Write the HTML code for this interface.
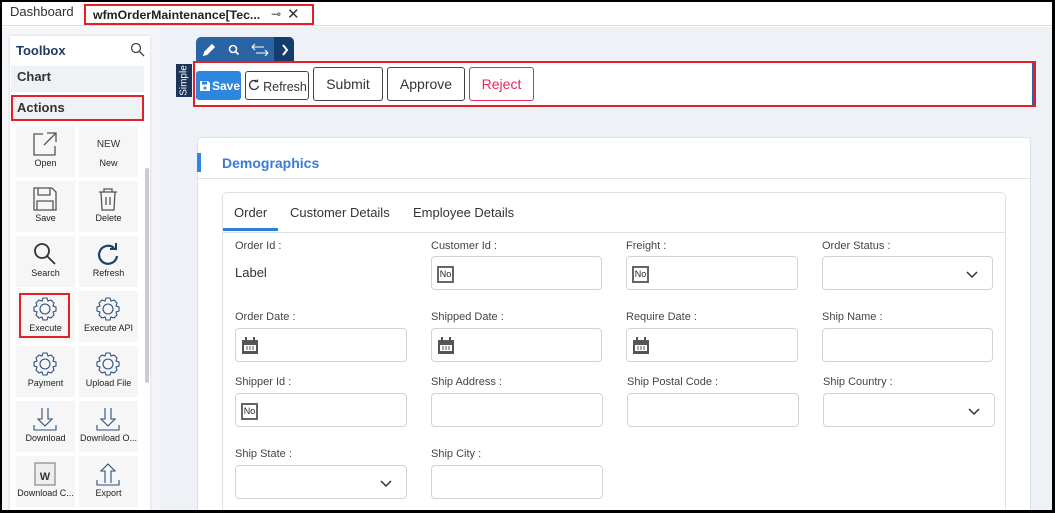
<!DOCTYPE html>
<html><head><style>
*{box-sizing:border-box;margin:0;padding:0}
body{width:1055px;height:513px;overflow:hidden;background:#000;font-family:"Liberation Sans",Arial,sans-serif;position:relative}
.a{position:absolute}
#pg{left:2px;top:2px;width:1050px;height:508px;background:#fff;overflow:hidden}
.tile{position:absolute;width:59px;height:51px;background:#f6f6f6;text-align:center;font-size:9px;color:#222}
.tile svg{position:absolute;left:17px;top:6px}
.tile span{position:absolute;left:0;right:0;top:32px;white-space:nowrap;overflow:hidden;text-overflow:ellipsis}
.lbl{position:absolute;font-size:11px;color:#444}
.inp{position:absolute;height:34px;border:1px solid #cfd4da;border-radius:4px;background:#fff}
.no{position:absolute;left:5px;top:9px;width:17px;height:17px;border:2px solid #666;font-size:9px;line-height:13px;text-align:center;color:#222;background:#fff}
.cal{position:absolute;left:5px;top:8px}
.chev{position:absolute;right:14px;top:11px}
.btn{position:absolute;border:1px solid #444;border-radius:3px;background:#fff;font-size:14px;color:#333;text-align:center}
</style></head><body>
<div id="pg" class="a">
<div class="a" style="left:0;top:0;width:1050px;height:24px;border-bottom:1px solid #ddd;background:#fff"></div>
<div class="a" style="left:8px;top:2px;font-size:13px;color:#333">Dashboard</div>
<div class="a" style="left:82px;top:2px;width:230px;height:21px;border:2px solid #e3202a"></div>
<div class="a" style="left:91px;top:6px;font-size:12.3px;font-weight:bold;color:#222">wfmOrderMaintenance[Tec...</div>
<div class="a" style="left:269px;top:5px;font-size:12px;color:#444">⊸</div>
<div class="a" style="left:285px;top:3px;font-size:15px;color:#333">✕</div>
<div class="a" style="left:0;top:25px;width:168px;height:485px;background:#f4f6f9"></div>
<div class="a" style="left:8px;top:34px;width:140px;height:476px;background:#fff;box-shadow:0 0 3px rgba(0,0,0,.15)"></div>
<div class="a" style="left:14px;top:41px;font-size:13px;font-weight:bold;color:#1e3a5f">Toolbox</div>
<svg class="a" style="left:128px;top:40px" width="15" height="15" viewBox="0 0 15 15"><circle cx="6" cy="6" r="4.5" fill="none" stroke="#444" stroke-width="1.3"/><path d="M9.5 9.5L14 14" stroke="#444" stroke-width="1.3"/></svg>
<div class="a" style="left:9px;top:64px;width:133px;height:26px;background:#eef2f5"></div>
<div class="a" style="left:15px;top:67px;font-size:13px;font-weight:bold;color:#333">Chart</div>
<div class="a" style="left:9px;top:93px;width:133px;height:26px;background:#eef2f5;border:2px solid #e3202a"></div>
<div class="a" style="left:15px;top:98px;font-size:13px;font-weight:bold;color:#333">Actions</div>
<div class="a" style="left:143px;top:166px;width:4px;height:215px;background:#ccc;border-radius:2px"></div>
<div class="tile" style="left:14px;top:124px"><svg width="24" height="24" viewBox="0 0 24 24" fill="none" stroke="#555" stroke-width="1.3"><path d="M10 2H1v21h21v-9M14 1h9v9M23 1L11 13"/></svg><span>Open</span></div>
<div class="tile" style="left:77px;top:124px"><span style="top:13px;font-size:10px;color:#333">NEW</span><span>New</span></div>
<div class="tile" style="left:14px;top:179px"><svg width="24" height="24" viewBox="0 0 24 24" fill="none" stroke="#555" stroke-width="1.3"><path d="M1 1h18l4 4v18H1zM5 1v7h12V1M4 23v-9h16v9"/></svg><span>Save</span></div>
<div class="tile" style="left:77px;top:179px"><svg width="24" height="24" viewBox="0 0 24 24" fill="none" stroke="#555" stroke-width="1.3"><path d="M3 5h18M8 5V2h8v3M5 5l1 18h12l1-18M10 10v8M14 10v8"/></svg><span>Delete</span></div>
<div class="tile" style="left:14px;top:234px"><svg width="24" height="24" viewBox="0 0 24 24" fill="none" stroke="#333" stroke-width="1.8"><circle cx="9" cy="9" r="7"/><path d="M14 14l8 8"/></svg><span>Search</span></div>
<div class="tile" style="left:77px;top:234px"><svg width="24" height="24" viewBox="0 0 24 24" fill="none" stroke="#1d3f6b" stroke-width="2.2"><path d="M18 6A9 9 0 1 0 21 14"/><path d="M14 7h6V1" stroke-width="2"/></svg><span>Refresh</span></div>
<div class="tile" style="left:14px;top:289px"><svg width="24" height="24" viewBox="0 0 24 24" fill="none" stroke="#2c4f7c" stroke-width="1.1"><path d="M10 1h4l1 3 3-1 3 3-1 3 3 1v4l-3 1 1 3-3 3-3-1-1 3h-4l-1-3-3 1-3-3 1-3-3-1v-4l3-1-1-3 3-3 3 1z"/><circle cx="12" cy="12" r="5"/></svg><span>Execute</span></div>
<div class="a" style="left:17px;top:291px;width:51px;height:45px;border:2px solid #e3202a"></div>
<div class="tile" style="left:77px;top:289px"><svg width="24" height="24" viewBox="0 0 24 24" fill="none" stroke="#2c4f7c" stroke-width="1.1"><path d="M10 1h4l1 3 3-1 3 3-1 3 3 1v4l-3 1 1 3-3 3-3-1-1 3h-4l-1-3-3 1-3-3 1-3-3-1v-4l3-1-1-3 3-3 3 1z"/><circle cx="12" cy="12" r="5"/></svg><span>Execute API</span></div>
<div class="tile" style="left:14px;top:344px"><svg width="24" height="24" viewBox="0 0 24 24" fill="none" stroke="#2c4f7c" stroke-width="1.1"><path d="M10 1h4l1 3 3-1 3 3-1 3 3 1v4l-3 1 1 3-3 3-3-1-1 3h-4l-1-3-3 1-3-3 1-3-3-1v-4l3-1-1-3 3-3 3 1z"/><circle cx="12" cy="12" r="5"/></svg><span>Payment</span></div>
<div class="tile" style="left:77px;top:344px"><svg width="24" height="24" viewBox="0 0 24 24" fill="none" stroke="#2c4f7c" stroke-width="1.1"><path d="M10 1h4l1 3 3-1 3 3-1 3 3 1v4l-3 1 1 3-3 3-3-1-1 3h-4l-1-3-3 1-3-3 1-3-3-1v-4l3-1-1-3 3-3 3 1z"/><circle cx="12" cy="12" r="5"/></svg><span>Upload File</span></div>
<div class="tile" style="left:14px;top:399px"><svg width="24" height="24" viewBox="0 0 24 24" fill="none" stroke="#2c4f7c" stroke-width="1.1"><path d="M9 1v11H5l7 7 7-7h-4V1M1 18v5h22v-5"/></svg><span>Download</span></div>
<div class="tile" style="left:77px;top:399px"><svg width="24" height="24" viewBox="0 0 24 24" fill="none" stroke="#2c4f7c" stroke-width="1.1"><path d="M9 1v11H5l7 7 7-7h-4V1M1 18v5h22v-5"/></svg><span>Download O...</span></div>
<div class="tile" style="left:14px;top:454px"><svg width="24" height="24" viewBox="0 0 24 24" fill="#eee" stroke="#888" stroke-width="1.2"><rect x="2" y="1" width="20" height="22"/><text x="12" y="18" font-size="11" font-weight="bold" text-anchor="middle" fill="#333" stroke="none">W</text></svg><span>Download C...</span></div>
<div class="tile" style="left:77px;top:454px"><svg width="24" height="24" viewBox="0 0 24 24" fill="none" stroke="#2c4f7c" stroke-width="1.1"><path d="M9 21V9H5l7-7 7 7h-4v12M1 18v5h22v-5"/></svg><span>Export</span></div>
<div class="a" style="left:158px;top:25px;width:892px;height:485px;background:#eef1f5"></div>
<div class="a" style="left:194px;top:35px;width:98px;height:24px;background:#2a64a5;border-radius:5px 5px 0 0;overflow:hidden"><div class="a" style="left:78px;top:0;width:20px;height:24px;background:#143d6b"></div></div>
<svg class="a" style="left:200px;top:40px" width="90" height="16" viewBox="0 0 90 16" fill="none" stroke="#fff" stroke-width="1.6"><path d="M2 13l1-3 7-7 2 2-7 7z" fill="#fff"/><circle cx="31" cy="7" r="3.5"/><path d="M33.5 9.5l3 3"/><path d="M50 5h12M50 5l3-3M50 5l3 3M66 11H54M66 11l-3-3M66 11l-3 3" stroke-width="1.1"/><path d="M81 3l4 5-4 5" stroke-width="2"/></svg>
<div class="a" style="left:174px;top:62px;width:16px;height:33px;background:#1c3557;color:#fff;font-size:10px"><div style="transform:rotate(-90deg);position:absolute;left:-9px;top:11px;width:34px;text-align:center">Simple</div></div>
<div class="a" style="left:191px;top:59px;width:843px;height:46px;border:2px solid #e3202a;background:#fff"><div class="a" style="right:0;top:0;width:2px;height:42px;background:#2a64a5"></div></div>
<div class="a" style="left:194px;top:69px;width:45px;height:29px;background:#2e86de;border-radius:3px;color:#fff;font-size:12px;font-weight:bold;line-height:31px;padding-left:16px;white-space:nowrap;overflow:hidden">Save</div>
<svg class="a" style="left:197px;top:78px" width="12" height="12" viewBox="0 0 12 12"><path d="M1 1h8l2 2v8H1z" fill="#fff"/><rect x="3" y="1.5" width="5" height="3" fill="#2e86de"/><circle cx="6" cy="8" r="1.5" fill="#2e86de"/></svg>
<div class="btn" style="left:243px;top:69px;width:64px;height:29px;line-height:31px;font-size:12.5px;padding-left:16px;white-space:nowrap;overflow:hidden">Refresh</div>
<svg class="a" style="left:246px;top:77px" width="12" height="12" viewBox="0 0 12 12" fill="none" stroke="#333" stroke-width="1.3"><path d="M9 2.5A4.5 4.5 0 1 0 10.5 7"/><path d="M6.5 2.5h3v-2"/></svg>
<div class="btn" style="left:311px;top:65px;width:70px;height:34px;line-height:32px">Submit</div>
<div class="btn" style="left:385px;top:65px;width:78px;height:34px;line-height:32px">Approve</div>
<div class="btn" style="left:467px;top:65px;width:65px;height:34px;line-height:32px;border-color:#e8265a;color:#e8265a">Reject</div>
<div class="a" style="left:195px;top:135px;width:834px;height:380px;background:#fff;border:1px solid #dde1e6;border-radius:5px"></div>
<div class="a" style="left:195px;top:176px;width:834px;height:1px;background:#dde1e6"></div>
<div class="a" style="left:195px;top:151px;width:4px;height:19px;background:#2e86de"></div>
<div class="a" style="left:220px;top:153px;font-size:14px;font-weight:bold;color:#3a7bd5">Demographics</div>
<div class="a" style="left:220px;top:190px;width:784px;height:330px;border:1px solid #dde1e6;border-radius:5px"></div>
<div class="a" style="left:220px;top:230px;width:784px;height:1px;background:#dde1e6"></div>
<div class="a" style="left:221px;top:226px;width:55px;height:3px;background:#2e7fd8"></div>
<div class="a" style="left:232px;top:203px;font-size:13px;color:#333">Order</div>
<div class="a" style="left:288px;top:203px;font-size:13px;color:#333">Customer Details</div>
<div class="a" style="left:411px;top:203px;font-size:13px;color:#333">Employee Details</div>

<div class="lbl" style="left:233px;top:238px">Order Id :</div>
<div class="a" style="left:233px;top:263px;font-size:13px;color:#333">Label</div>
<div class="lbl" style="left:429px;top:238px">Customer Id :</div>
<div class="inp" style="left:429px;top:254px;width:171px"><div class="no">No</div></div>
<div class="lbl" style="left:624px;top:238px">Freight :</div>
<div class="inp" style="left:624px;top:254px;width:172px"><div class="no">No</div></div>
<div class="lbl" style="left:820px;top:238px">Order Status :</div>
<div class="inp" style="left:820px;top:254px;width:171px"><svg class="chev" width="12" height="12" viewBox="0 0 12 12"><path d="M1 4l5 5 5-5" fill="none" stroke="#333" stroke-width="1.5"/></svg></div>

<div class="lbl" style="left:233px;top:309px">Order Date :</div>
<div class="inp" style="left:233px;top:326px;width:172px"><svg class="cal" width="18" height="18" viewBox="0 0 18 18"><rect x="1" y="3" width="16" height="14" fill="#555"/><rect x="4" y="0" width="2" height="4" fill="#555"/><rect x="12" y="0" width="2" height="4" fill="#555"/><rect x="3" y="8" width="12" height="6" fill="#fff"/><path d="M5 10h2M8 10h2M11 10h2M5 12h2M8 12h2M11 12h2" stroke="#555"/></svg></div>
<div class="lbl" style="left:429px;top:309px">Shipped Date :</div>
<div class="inp" style="left:429px;top:326px;width:171px"><svg class="cal" width="18" height="18" viewBox="0 0 18 18"><rect x="1" y="3" width="16" height="14" fill="#555"/><rect x="4" y="0" width="2" height="4" fill="#555"/><rect x="12" y="0" width="2" height="4" fill="#555"/><rect x="3" y="8" width="12" height="6" fill="#fff"/><path d="M5 10h2M8 10h2M11 10h2M5 12h2M8 12h2M11 12h2" stroke="#555"/></svg></div>
<div class="lbl" style="left:624px;top:309px">Require Date :</div>
<div class="inp" style="left:624px;top:326px;width:172px"><svg class="cal" width="18" height="18" viewBox="0 0 18 18"><rect x="1" y="3" width="16" height="14" fill="#555"/><rect x="4" y="0" width="2" height="4" fill="#555"/><rect x="12" y="0" width="2" height="4" fill="#555"/><rect x="3" y="8" width="12" height="6" fill="#fff"/><path d="M5 10h2M8 10h2M11 10h2M5 12h2M8 12h2M11 12h2" stroke="#555"/></svg></div>
<div class="lbl" style="left:820px;top:309px">Ship Name :</div>
<div class="inp" style="left:820px;top:326px;width:171px"></div>

<div class="lbl" style="left:233px;top:374px">Shipper Id :</div>
<div class="inp" style="left:233px;top:391px;width:172px"><div class="no">No</div></div>
<div class="lbl" style="left:429px;top:374px">Ship Address :</div>
<div class="inp" style="left:429px;top:391px;width:172px"></div>
<div class="lbl" style="left:625px;top:374px">Ship Postal Code :</div>
<div class="inp" style="left:625px;top:391px;width:172px"></div>
<div class="lbl" style="left:821px;top:374px">Ship Country :</div>
<div class="inp" style="left:821px;top:391px;width:172px"><svg class="chev" width="12" height="12" viewBox="0 0 12 12"><path d="M1 4l5 5 5-5" fill="none" stroke="#333" stroke-width="1.5"/></svg></div>

<div class="lbl" style="left:233px;top:446px">Ship State :</div>
<div class="inp" style="left:233px;top:463px;width:172px"><svg class="chev" width="12" height="12" viewBox="0 0 12 12"><path d="M1 4l5 5 5-5" fill="none" stroke="#333" stroke-width="1.5"/></svg></div>
<div class="lbl" style="left:429px;top:446px">Ship City :</div>
<div class="inp" style="left:429px;top:463px;width:172px"></div>
</div>
</body></html>
